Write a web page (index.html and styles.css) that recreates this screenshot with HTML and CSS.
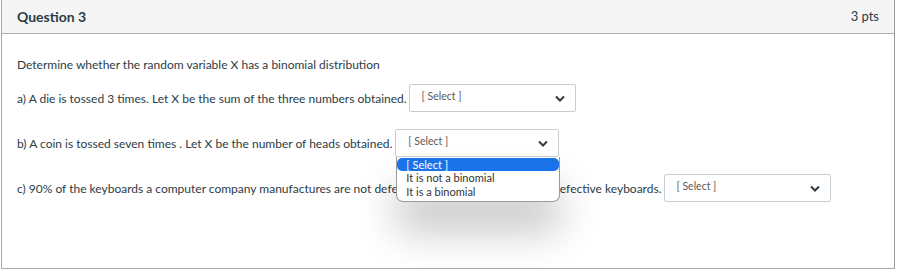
FILE: index.html
```html
<!DOCTYPE html>
<html lang="en">
<head>
    <meta charset="UTF-8">
    <title>Question 3</title>
    <link rel="stylesheet" href="styles.css">
</head>
<body>
    <div class="question">
        <div class="question-header">
            <span class="question-title">Question 3</span>
            <span class="question-points">3 pts</span>
        </div>
        <div class="question-body">
            <p class="intro">Determine whether the random variable X has a binomial distribution</p>

            <div class="item">
                <span>a) A die is tossed 3 times. Let X be the sum of the three numbers obtained.</span>
                <div class="select select-a">
                    <span class="select-label">[ Select ]</span>
                    <svg class="chevron" width="10" height="7" viewBox="0 0 10 7"><path d="M1 1.5 L5 5.5 L9 1.5" fill="none" stroke="#2d3b45" stroke-width="2"/></svg>
                </div>
            </div>

            <div class="item">
                <span>b) A coin is tossed seven times . Let X be the number of heads obtained.</span>
                <div class="select select-b open">
                    <span class="select-label">[ Select ]</span>
                    <svg class="chevron" width="10" height="7" viewBox="0 0 10 7"><path d="M1 1.5 L5 5.5 L9 1.5" fill="none" stroke="#2d3b45" stroke-width="2"/></svg>
                    <ul class="options">
                        <li class="active">[ Select ]</li>
                        <li>It is not a binomial</li>
                        <li>It is a binomial</li>
                    </ul>
                </div>
            </div>

            <div class="item">
                <span>c) 90% of the keyboards a computer company manufactures are not defective. Let X be the number of defective keyboards.</span>
                <div class="select select-c">
                    <span class="select-label">[ Select ]</span>
                    <svg class="chevron" width="10" height="7" viewBox="0 0 10 7"><path d="M1 1.5 L5 5.5 L9 1.5" fill="none" stroke="#2d3b45" stroke-width="2"/></svg>
                </div>
            </div>
        </div>
    </div>
</body>
</html>
```

FILE: styles.css
```css
body {
    margin: 0;
    font-family: Lato, "Open Sans", sans-serif;
    color: #2d3b45;
    background: white;
}
.question {
    margin-left: 1px;
    width: 894px;
    height: 269px;
    box-sizing: border-box;
    border: 1px solid #a8a8a8;
    border-top: none;
    border-right-color: #9a9a9a;
}
.question-header {
    display: flex;
    justify-content: space-between;
    align-items: center;
    height: 32px;
    padding: 0 15px 1px 15px;
    background: #f5f5f5;
    border-bottom: 1px solid #adadad;
    box-sizing: content-box;
}
.question-title {
    font-size: 14px;
    font-weight: bold;
    color: #2d3b45;
}
.question-points {
    font-size: 13px;
    color: #2d3b45;
}
.question-body {
    padding: 23px 15px 0 15px;
    font-size: 12px;
}
.intro {
    margin: 0 0 11px 0;
    line-height: 16px;
}
.item {
    display: flex;
    align-items: center;
    gap: 3px;
    margin-bottom: 17px;
}
.select {
    position: relative;
    display: flex;
    justify-content: space-between;
    align-items: center;
    height: 28px;
    box-sizing: border-box;
    padding: 0 10px 0 12px;
    border: 1px solid #c7cdd1;
    border-radius: 2px;
    background: white;
}
.select-a { width: 167px; margin-left: -1px; }
.select-b { width: 164px; }
.select-c { width: 167px; margin-left: -1px; }
.select-label {
    font-size: 10.5px;
    color: #5a5a5a;
    margin-top: -4px;
}
.options {
    position: absolute;
    left: 0;
    top: 27px;
    width: 162px;
    margin: 0;
    padding: 0;
    list-style: none;
    background: white;
    border: 1px solid #9a9a9a;
    border-top: none;
    border-radius: 0 0 7px 7px;
    box-shadow: 0 30px 40px rgba(0, 0, 0, 0.22);
    z-index: 5;
}
.options li {
    height: 14px;
    line-height: 14px;
    padding-left: 9px;
    font-size: 11px;
    color: #333;
}
.options li.active {
    background: #1a73e8;
    color: white;
    border-radius: 5px;
    margin: 1px 0 0 0;
    height: 13px;
    line-height: 13px;
}
.options li:last-child {
    padding-bottom: 2px;
}
```
